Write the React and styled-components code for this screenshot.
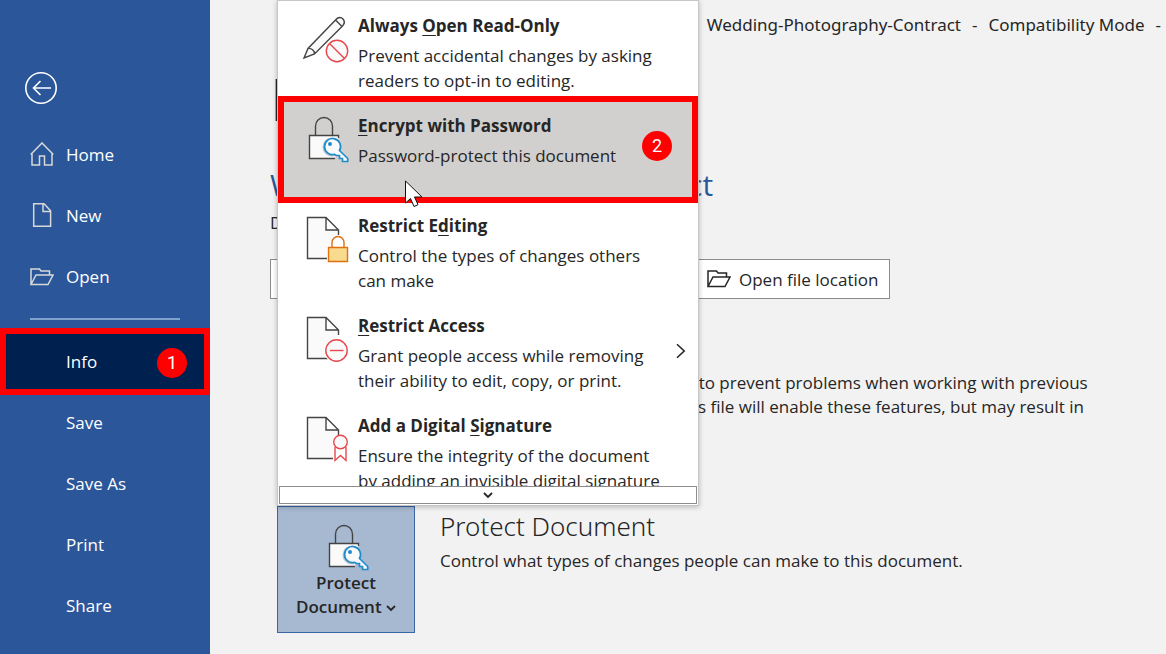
import styled, { createGlobalStyle, css } from 'styled-components';

const GlobalStyle = createGlobalStyle`
  * {
    box-sizing: border-box;
  }

  body {
    margin: 0;
    background: #f2f2f2;
    color: #262626;
    font-family: 'Open Sans', 'Noto Sans', sans-serif;
    font-size: 17px;
    line-height: 25px;
    overflow: hidden;
  }

  button {
    font: inherit;
    color: inherit;
    border: 0;
    padding: 0;
    background: none;
  }

  h1, h2, h3, p {
    margin: 0;
    font-weight: 400;
  }

  svg {
    flex-shrink: 0;
  }
`;

const Backstage = styled.div`
  display: flex;
  min-height: 100vh;
`;

const Sidebar = styled.nav`
  flex: 0 0 210px;
  display: flex;
  flex-direction: column;
  padding-top: 72px;
  background: #2b579a;
  color: #fff;
`;

const BackButton = styled.button`
  width: 32px;
  height: 32px;
  margin: 0 0 20px 25px;
`;

const redFrame = css`
  &::after {
    content: '';
    position: absolute;
    border: 6px solid #ff0000;
    pointer-events: none;
  }
`;

const NavItem = styled.button`
  position: relative;
  display: flex;
  align-items: center;
  height: 61px;
  padding-left: 30px;
  text-align: left;

  ${({ $active }) =>
    $active &&
    css`
      background: #002050;
      ${redFrame}
      &::after {
        inset: -3px 0;
      }
    `}
`;

const NavIcon = styled.span`
  display: flex;
  width: 36px;
  color: #d8d8d8;
`;

const NavDivider = styled.hr`
  width: 150px;
  height: 2px;
  margin: 11px 30px;
  border: 0;
  background: #7da3cc;
`;

const Badge = styled.span`
  position: absolute;
  top: ${({ $top }) => $top}px;
  right: ${({ $right }) => $right}px;
  width: 30px;
  height: 30px;
  border-radius: 50%;
  background: #ff0000;
  color: #fff;
  font-family: Roboto, sans-serif;
  font-size: 18px;
  line-height: 30px;
  text-align: center;
`;

const Main = styled.main`
  flex: 1;
  min-width: 0;
  padding-left: 60px;
`;

const TitleBar = styled.header`
  display: flex;
  justify-content: flex-end;
  gap: 11px;
  padding: 12px 5px 0 0;
  font-family: 'Noto Sans', sans-serif;
  white-space: nowrap;
`;

const PageTitle = styled.h1`
  margin-top: 22px;
  font-size: 58px;
  line-height: 80px;
`;

const DocTitle = styled.h2`
  margin-top: 26px;
  color: #2b579a;
  font-size: 30px;
  line-height: 40px;
`;

const DocPath = styled.p`
  margin-top: 5px;
`;

const Actions = styled.div`
  display: grid;
  grid-template-columns: repeat(3, 130px) auto;
  justify-content: start;
  gap: 10px;
  margin-top: 24px;
`;

const ActionButton = styled.button`
  display: flex;
  align-items: center;
  gap: 8px;
  height: 40px;
  padding: 0 11px 0 16px;
  border: 1px solid #8c8c8c;
  background: #fff;
  white-space: nowrap;
`;

const Section = styled.section`
  padding-left: 170px;
  margin-top: ${({ $gap }) => $gap}px;
`;

const SectionTitle = styled.h3`
  font-family: 'Noto Sans', sans-serif;
  font-size: 26px;
  font-weight: 300;
  line-height: 36px;
`;

const CompatText = styled.p`
  margin-top: 4px;
  line-height: 24px;
  white-space: nowrap;
`;

const ProtectRow = styled.section`
  display: flex;
  gap: 25px;
  margin: 63px 0 0 7px;
`;

const ProtectText = styled.div`
  padding-top: 2px;

  p {
    margin-top: 4px;
  }
`;

const MenuAnchor = styled.div`
  position: relative;
`;

const ProtectButton = styled.button`
  display: flex;
  flex-direction: column;
  align-items: center;
  width: 138px;
  height: 127px;
  padding-top: 16px;
  border: 1px solid #3a66a8;
  background: #a6b9d1;
  font-weight: 600;
  line-height: 24px;
`;

const Menu = styled.div`
  position: absolute;
  left: 0;
  bottom: 100%;
  display: flex;
  flex-direction: column;
  width: 422px;
  height: 506px;
  border: 1px solid #c6c6c6;
  background: #fff;
  box-shadow: 0 1px 5px rgba(0, 0, 0, 0.25);
`;

const MenuList = styled.div`
  flex: 1;
  min-height: 0;
  overflow: hidden;
`;

const MenuItem = styled.button`
  position: relative;
  display: flex;
  gap: 8px;
  width: 100%;
  height: 100px;
  padding: 12px 24px 0;
  text-align: left;

  > svg:first-child {
    margin-top: 2px;
  }

  ${({ $highlighted }) =>
    $highlighted &&
    css`
      background: #d2d0ce;
      ${redFrame}
      &::after {
        inset: -5px 0 -2px;
      }
    `}
`;

const MenuText = styled.span`
  display: flex;
  flex-direction: column;
  gap: 5px;
  white-space: nowrap;

  u {
    text-underline-offset: 3px;
    text-decoration-thickness: 1px;
  }
`;

const ItemChevron = styled.span`
  position: absolute;
  top: 42px;
  right: 9px;
  display: flex;
`;

const ScrollDown = styled.button`
  display: flex;
  align-items: center;
  justify-content: center;
  height: 18px;
  margin: 0 1px 1px;
  border: 1px solid #8c8c8c;
`;

const Pointer = styled.svg`
  position: absolute;
  top: 79px;
  left: 126px;
  z-index: 1;
`;

function HomeIcon() {
  return (
    <svg width="24" height="26" viewBox="0 0 24 26" fill="none" stroke="currentColor" strokeWidth="1.5">
      <path d="M.7 12.500 12 1l11.300 11.500M2 11.300V23h7.500v-9h5v9H22V11.300" />
    </svg>
  );
}

function NewIcon() {
  return (
    <svg width="24" height="26" viewBox="0 0 24 26" fill="none" stroke="currentColor" strokeWidth="1.500">
      <path d="M3.700 .8H14l6.600 7v15.500H3.700ZM13 .8v7.700h7.600" />
    </svg>
  );
}

function FolderIcon() {
  return (
    <svg width="24" height="20" viewBox="0 0 24 20" fill="none" stroke="currentColor" strokeWidth="1.500">
      <path d="M1 17.500V2h8.500l1.500 2h8.500v4M1 17.500 6 8h17l-5 9.500Z" />
    </svg>
  );
}

function Chevron({ size = 10, right }) {
  return (
    <svg width={size} height={size} viewBox="0 0 10 10" fill="none" stroke="#262626" strokeWidth={right ? 1 : 1.8}>
      <path d={right ? 'M2.500 .8 7 5 2.500 9.200' : 'M1 3l4 4 4-4'} />
    </svg>
  );
}

function LockKeyIcon() {
  return (
    <svg width="48" height="48" viewBox="0 0 48 48" fill="none" strokeWidth="1.400">
      <path d="M13.500 20.500V11a8.500 8.500 0 0 1 17 0v9.500" stroke="#444" />
      <path d="M36.500 23v-2.500h-29v23H33" fill="#fafafa" stroke="#444" />
      <circle cx="30" cy="32" r="9.500" fill="#b9c3cc" />
      <path
        d="M37.500 35.500 45.700 43.500V46.500H40.500V43.500H37.500V40.500H34.500L32.500 39.300A8 8 0 1 1 37.500 35.500Z"
        fill="#fafafa"
        stroke="#1e8bcd"
        strokeWidth="1.700"
      />
      <circle cx="28" cy="29" r="2" fill="#1e8bcd" />
    </svg>
  );
}

const page = <path d="M33 43.500H5.500v-41H24l12.500 12.500V20M24 2.500V15h12.500" fill="#fafafa" stroke="#444" />;

function PencilBlockedIcon() {
  return (
    <svg width="48" height="48" viewBox="0 0 48 48" fill="none" strokeWidth="1.400">
      <path
        d="M2 43 6 33.500 33.500 5C36 2 39 1.800 41 4s1.500 5-1 7.500L12.500 39ZM6 33.500c3-.8 7 2.500 6.500 5.500M33.500 5l6.500 6.500"
        fill="#fafafa"
        stroke="#444"
      />
      <circle cx="35" cy="36" r="12.500" fill="#fff" />
      <circle cx="35" cy="36" r="10.700" stroke="#e8474c" fill="#fafafa" />
      <path d="M27.500 28.500l15 15" stroke="#e8474c" />
    </svg>
  );
}

function PageLockIcon() {
  return (
    <svg width="48" height="48" viewBox="0 0 48 48" fill="none" strokeWidth="1.400">
      {page}
      <path d="M25 30h22v18H25Z" fill="#fff" />
      <path d="M30 32v-4.500a6 6 0 0 1 12 0V32" fill="#fff" stroke="#e07010" />
      <path d="M26.500 32.500h19v14h-19Z" fill="#f8db8f" stroke="#e07010" />
    </svg>
  );
}

function PageBlockedIcon() {
  return (
    <svg width="48" height="48" viewBox="0 0 48 48" fill="none" strokeWidth="1.400">
      {page}
      <circle cx="34.500" cy="35.500" r="12.500" fill="#fff" />
      <circle cx="34.500" cy="35.500" r="10.700" fill="#fafafa" stroke="#e8474c" />
      <path d="M28 35.500h13.500" stroke="#e8474c" />
    </svg>
  );
}

function PageRibbonIcon() {
  return (
    <svg width="48" height="48" viewBox="0 0 48 48" fill="none" strokeWidth="1.400">
      {page}
      <path d="M31 21h16v26H31Z" fill="#fff" />
      <path d="M33 32v13.500l5.500-5 5.500 5V32" stroke="#e8474c" />
      <circle cx="38.500" cy="27" r="6.800" fill="#fafafa" stroke="#e8474c" />
    </svg>
  );
}

const places = [
  { label: 'Home', Icon: HomeIcon },
  { label: 'New', Icon: NewIcon },
  { label: 'Open', Icon: FolderIcon },
];

const commands = ['Info', 'Save', 'Save As', 'Print', 'Share'];

const protectOptions = [
  {
    Icon: PencilBlockedIcon,
    title: <>Always <u>O</u>pen Read-Only</>,
    lines: ['Prevent accidental changes by asking', 'readers to opt-in to editing.'],
  },
  {
    Icon: LockKeyIcon,
    title: <><u>E</u>ncrypt with Password</>,
    lines: ['Password-protect this document'],
    highlighted: true,
  },
  {
    Icon: PageLockIcon,
    title: <>Restrict E<u>d</u>iting</>,
    lines: ['Control the types of changes others', 'can make'],
  },
  {
    Icon: PageBlockedIcon,
    title: <><u>R</u>estrict Access</>,
    lines: ['Grant people access while removing', 'their ability to edit, copy, or print.'],
    submenu: true,
  },
  {
    Icon: PageRibbonIcon,
    title: <>Add a Digital <u>S</u>ignature</>,
    lines: ['Ensure the integrity of the document', 'by adding an invisible digital signature'],
  },
];

function ProtectMenu() {
  return (
    <Menu>
      <MenuList>
        {protectOptions.map(({ Icon, title, lines, highlighted, submenu }) => (
          <MenuItem key={lines[0]} $highlighted={highlighted}>
            <Icon />
            <MenuText>
              <b>{title}</b>
              <span>
                {lines[0]}
                <br />
                {lines[1]}
              </span>
            </MenuText>
            {submenu && (
              <ItemChevron>
                <Chevron size={16} right />
              </ItemChevron>
            )}
            {highlighted && <Badge $top={30} $right={26}>2</Badge>}
            {highlighted && (
              <Pointer width="20" height="28" viewBox="0 0 20 28">
                <path d="M1.500 1v22l5-4.500 3.500 8 4-1.800-3.500-7.700H18Z" fill="#fff" stroke="#111" />
              </Pointer>
            )}
          </MenuItem>
        ))}
      </MenuList>
      <ScrollDown aria-label="Scroll down">
        <Chevron />
      </ScrollDown>
    </Menu>
  );
}

function App() {
  return (
    <Backstage>
      <GlobalStyle />
      <Sidebar>
        <BackButton aria-label="Back">
          <svg width="32" height="32" viewBox="0 0 32 32" fill="none" stroke="#fff" strokeWidth="1.600">
            <circle cx="16" cy="16" r="15.200" />
            <path d="M26 16H8.500M15.500 9l-7 7 7 7" />
          </svg>
        </BackButton>
        {places.map(({ label, Icon }) => (
          <NavItem key={label}>
            <NavIcon>
              <Icon />
            </NavIcon>
            {label}
          </NavItem>
        ))}
        <NavDivider />
        {commands.map((label) => (
          <NavItem key={label} $active={label === 'Info'}>
            <NavIcon />
            {label}
            {label === 'Info' && <Badge $top={17} $right={23}>1</Badge>}
          </NavItem>
        ))}
      </Sidebar>
      <Main>
        <TitleBar>
          <span>Wedding-Photography-Contract</span>
          <span>-</span>
          <span>Compatibility Mode</span>
          <span>-</span>
        </TitleBar>
        <PageTitle>Info</PageTitle>
        <DocTitle>Wedding-Photography-Contract</DocTitle>
        <DocPath>Documents</DocPath>
        <Actions>
          <ActionButton>Upload</ActionButton>
          <ActionButton>Share</ActionButton>
          <ActionButton>Copy path</ActionButton>
          <ActionButton>
            <FolderIcon />
            Open file location
          </ActionButton>
        </Actions>
        <Section $gap={32}>
          <SectionTitle>Compatibility Mode</SectionTitle>
          <CompatText>
            Some new features are disabled to prevent problems when working with previous
            <br />
            versions of Office. Converting this file will enable these features, but may result in
            <br />
            layout changes.
          </CompatText>
        </Section>
        <ProtectRow>
          <MenuAnchor>
            <ProtectMenu />
            <ProtectButton>
              <LockKeyIcon />
              <span>
                Protect
                <br />
                Document <Chevron />
              </span>
            </ProtectButton>
          </MenuAnchor>
          <ProtectText>
            <SectionTitle>Protect Document</SectionTitle>
            <p>Control what types of changes people can make to this document.</p>
          </ProtectText>
        </ProtectRow>
      </Main>
    </Backstage>
  );
}

export default App;
